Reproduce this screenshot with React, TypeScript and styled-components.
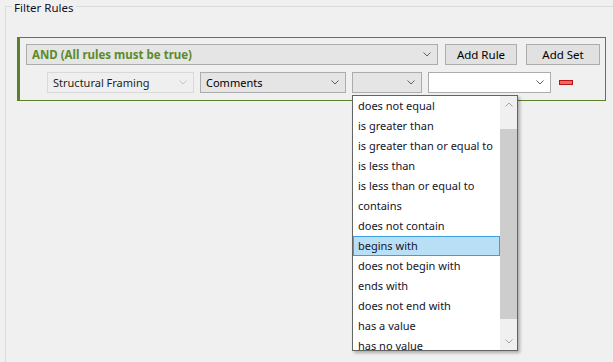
import React from "react"
import styled, { createGlobalStyle } from "styled-components"

const GlobalStyle = createGlobalStyle`
  html, body {
    margin: 0;
    padding: 0;
    background: #f0f0f0;
    overflow: hidden;
  }
  body {
    font-family: "Noto Sans", "Open Sans", sans-serif;
    font-size: 11px;
    color: #000;
  }
`

const green = "#5b7f2b"

const Page = styled.div`
  width: 613px;
  height: 362px;
  padding-top: 6px;
  padding-left: 5px;
  box-sizing: border-box;
`

const GroupBox = styled.div`
  position: relative;
  height: 356px;
  border-top: 1px solid #dcdcdc;
  border-left: 1px solid #dcdcdc;
  padding: 30px 0 0 11px;
  box-sizing: border-box;
`

const Legend = styled.div`
  position: absolute;
  top: -6px;
  left: 6px;
  padding: 0 2px;
  font-size: 11.5px;
  line-height: 14px;
  background: #f0f0f0;
  color: #10102a;
`

const RuleSet = styled.div`
  width: 589px;
  height: 64px;
  box-sizing: border-box;
  border: 1px solid ${green};
  border-left-width: 3px;
  padding: 6px 5px 0 6px;
  display: flex;
  flex-direction: column;
  gap: 7px;
`

const Row = styled.div<{ $indent?: number }>`
  display: flex;
  align-items: center;
  height: 21px;
  padding-left: ${p => p.$indent ?? 0}px;
`

type Variant = "normal" | "disabled" | "edit"

const Combo = styled.div<{ $width?: number; $variant?: Variant; $gap?: number }>`
  position: relative;
  display: flex;
  align-items: center;
  justify-content: space-between;
  box-sizing: border-box;
  height: 21px;
  ${p => (p.$width ? `width: ${p.$width}px;` : "flex: 1;")}
  margin-right: ${p => p.$gap ?? 6}px;
  padding: 0 6px 0 5px;
  border: 1px solid ${p => (p.$variant === "disabled" ? "#d9d9d9" : "#acacac")};
  background: ${p =>
    p.$variant === "edit" ? "#ffffff" : p.$variant === "disabled" ? "#efefef" : "#e5e5e5"};
  color: ${p => (p.$variant === "disabled" ? "#1e1e1e" : "#000")};
  white-space: nowrap;
`

const ComboText = styled.span<{ $bold?: boolean }>`
  font-weight: ${p => (p.$bold ? 700 : 400)};
  font-size: ${p => (p.$bold ? "11.5px" : "11px")};
  color: ${p => (p.$bold ? "#5c8a2c" : "inherit")};
  line-height: 19px;
`

const Button = styled.div<{ $width: number; $gap?: number }>`
  display: flex;
  align-items: center;
  justify-content: center;
  box-sizing: border-box;
  width: ${p => p.$width}px;
  height: 21px;
  margin-right: ${p => p.$gap ?? 0}px;
  border: 1px solid #adadad;
  background: #e1e1e1;
  font-size: 11.5px;
`

const RemoveButton = styled.div`
  width: 14px;
  height: 5px;
  box-sizing: border-box;
  margin-left: 2px;
  border: 1px solid #b81414;
  background: #f06565;
`

const DropList = styled.div`
  position: absolute;
  top: 22px;
  left: -1px;
  z-index: 10;
  width: 166px;
  height: 256px;
  box-sizing: border-box;
  border: 1px solid #646464;
  background: #fff;
  box-shadow: 2px 2px 3px rgba(0, 0, 0, 0.28);
  display: flex;
  overflow: hidden;
`

const Items = styled.div`
  flex: 1;
  display: flex;
  flex-direction: column;
`

const Item = styled.div<{ $selected?: boolean }>`
  height: 20px;
  flex-shrink: 0;
  box-sizing: border-box;
  padding-left: 4px;
  line-height: 18px;
  font-size: 11px;
  border: 1px solid ${p => (p.$selected ? "#3d9ee0" : "transparent")};
  background: ${p => (p.$selected ? "#b9dff6" : "transparent")};
  color: #14142a;
  white-space: nowrap;
`

const ScrollBar = styled.div`
  width: 17px;
  background: #f0f0f0;
  display: flex;
  flex-direction: column;
`

const ScrollArrow = styled.div`
  height: 17px;
  display: flex;
  align-items: center;
  justify-content: center;
  flex-shrink: 0;
`

const ScrollTrack = styled.div`
  flex: 1;
  display: flex;
  flex-direction: column;
  padding: 16px 0 14px;
`

const ScrollThumb = styled.div`
  flex: 1;
  background: #cdcdcd;
`

function Chevron({ color = "#606060", up = false }: { color?: string; up?: boolean }) {
  return (
    <svg width="8" height="5" viewBox="0 0 8 5">
      <polyline
        points={up ? "0.5,4.5 4,1 7.5,4.5" : "0.5,0.5 4,4 7.5,0.5"}
        fill="none"
        stroke={color}
        strokeWidth="1"
      />
    </svg>
  )
}

const operators = [
  "does not equal",
  "is greater than",
  "is greater than or equal to",
  "is less than",
  "is less than or equal to",
  "contains",
  "does not contain",
  "begins with",
  "does not begin with",
  "ends with",
  "does not end with",
  "has a value",
  "has no value",
]

function OperatorList() {
  return (
    <DropList>
      <Items>
        {operators.map(op => (
          <Item key={op} $selected={op === "begins with"}>
            {op}
          </Item>
        ))}
      </Items>
      <ScrollBar>
        <ScrollArrow>
          <Chevron up color="#a3a3a3" />
        </ScrollArrow>
        <ScrollTrack>
          <ScrollThumb />
        </ScrollTrack>
        <ScrollArrow>
          <Chevron color="#a3a3a3" />
        </ScrollArrow>
      </ScrollBar>
    </DropList>
  )
}

export default function App() {
  return (
    <>
      <GlobalStyle />
      <Page>
        <GroupBox>
          <Legend>Filter Rules</Legend>
          <RuleSet>
            <Row>
              <Combo $gap={7}>
                <ComboText $bold>AND (All rules must be true)</ComboText>
                <Chevron />
              </Combo>
              <Button $width={72} $gap={9}>Add Rule</Button>
              <Button $width={74}>Add Set</Button>
            </Row>
            <Row $indent={21}>
              <Combo $width={147} $variant="disabled">
                <ComboText>Structural Framing</ComboText>
                <Chevron color="#c4c4c4" />
              </Combo>
              <Combo $width={146}>
                <ComboText>Comments</ComboText>
                <Chevron />
              </Combo>
              <Combo $width={70}>
                <span />
                <Chevron />
                <OperatorList />
              </Combo>
              <Combo $width={123} $variant="edit" $gap={6}>
                <span />
                <Chevron />
              </Combo>
              <RemoveButton />
            </Row>
          </RuleSet>
        </GroupBox>
      </Page>
    </>
  )
}
